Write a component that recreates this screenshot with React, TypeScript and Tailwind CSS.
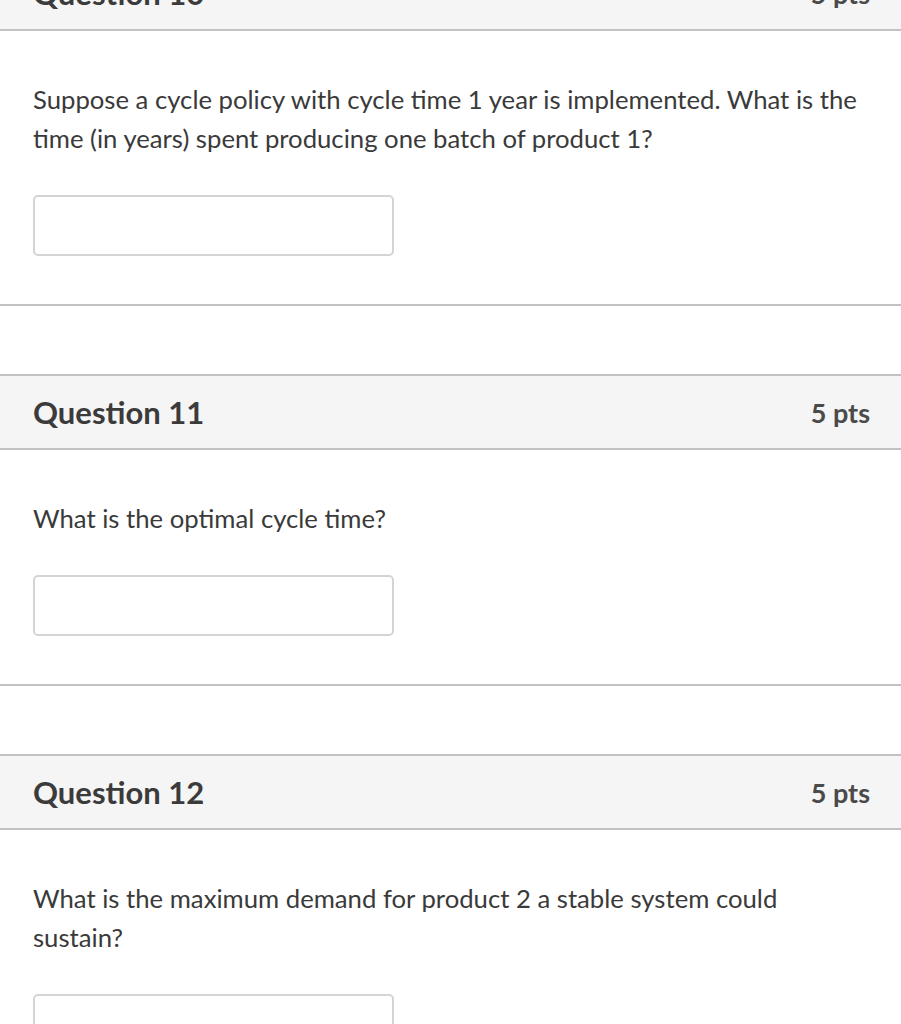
import React from 'react'

type Question = {
  number: number
  points: number
  text: string
}

const QUESTIONS: Question[] = [
  {
    number: 10,
    points: 5,
    text: 'Suppose a cycle policy with cycle time 1 year is implemented. What is the time (in years) spent producing one batch of product 1?',
  },
  { number: 11, points: 5, text: 'What is the optimal cycle time?' },
  {
    number: 12,
    points: 5,
    text: 'What is the maximum demand for product 2 a stable system could sustain?',
  },
]

function QuestionCard({ q }: { q: Question }) {
  return (
    <div className="border-b-2 border-[#c2c2c2]">
      <div className="h-[76px] flex items-center justify-between pl-[33px] pr-[31px] bg-[#f5f5f5] border-t-2 border-b-2 border-[#c2c2c2]">
        <h2 className="text-[31px] font-bold text-[#3b3b3b] leading-none">Question {q.number}</h2>
        <span className="text-[27px] font-bold text-[#4a4a4a] leading-none">{q.points} pts</span>
      </div>
      <div className="pl-[33px] pr-[28px] pt-[49px] pb-[48px]">
        <p className="text-[25.7px] leading-[39px] text-[#3a3a3a]">{q.text}</p>
        <input
          type="text"
          className="mt-[37px] block w-[361px] h-[61px] rounded-[5px] border-2 border-[#d4d4d4] bg-white outline-none"
        />
      </div>
    </div>
  )
}

export default function App() {
  return (
    <div className="w-[901px] h-[1024px] overflow-hidden bg-white" style={{ fontFamily: 'Lato, "Noto Sans", sans-serif' }}>
      <div className="-mt-[45px] flex flex-col gap-[68px]">
        {QUESTIONS.map((q) => (
          <QuestionCard key={q.number} q={q} />
        ))}
      </div>
    </div>
  )
}
